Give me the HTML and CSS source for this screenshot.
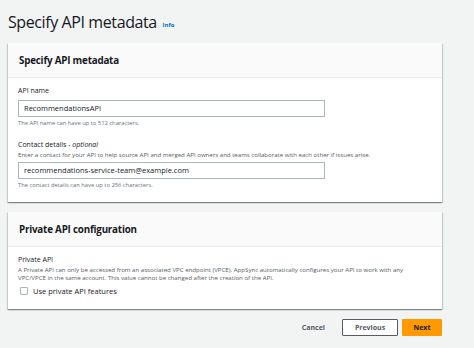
FILE: index.html
```html
<!DOCTYPE html>
<html>
<head>
<meta charset="utf-8">
<link rel="stylesheet" href="styles.css">
</head>
<body>
<div class="page">
  <h1 class="title">Specify API metadata <a class="info">Info</a></h1>

  <section class="card">
    <div class="card-head"><h2>Specify API metadata</h2></div>
    <div class="card-body">
      <div class="field">
        <div class="label">API name</div>
        <div class="input">RecommendationsAPI</div>
        <div class="hint">The API name can have up to 512 characters.</div>
      </div>
      <div class="field">
        <div class="label">Contact details - <i>optional</i></div>
        <div class="desc">Enter a contact for your API to help source API and merged API owners and teams collaborate with each other if issues arise.</div>
        <div class="input">recommendations-service-team@example.com</div>
        <div class="hint">The contact details can have up to 256 characters.</div>
      </div>
    </div>
  </section>

  <section class="card">
    <div class="card-head"><h2>Private API configuration</h2></div>
    <div class="card-body">
      <div class="label">Private API</div>
      <div class="desc">A Private API can only be accessed from an associated VPC endpoint (VPCE). AppSync automatically configures your API to work with any VPC/VPCE in the same account. This value cannot be changed after the creation of the API.</div>
      <label class="check"><span class="box"></span>Use private API features</label>
    </div>
  </section>

  <div class="actions">
    <button class="btn link">Cancel</button>
    <button class="btn secondary">Previous</button>
    <button class="btn primary">Next</button>
  </div>
</div>
</body>
</html>
```

FILE: styles.css
```css
html, body {
  margin: 0;
  padding: 0;
  background: #f2f3f3;
  font-family: "Open Sans", "Noto Sans", sans-serif;
  color: #16191f;
}
.page {
  width: 434px;
  padding: 8px 32px 0 8px;
}
.title {
  margin: 0;
  font-size: 16px;
  font-weight: 400;
  line-height: 28px;
  height: 35px;
  letter-spacing: -0.4px;
}
.info {
  font-size: 6px;
  font-weight: 700;
  color: #0073bb;
  letter-spacing: 0;
  vertical-align: 1px;
  margin-left: 2px;
}
.card {
  background: #fff;
  box-shadow: 0 1px 1px 0 rgba(0,28,36,0.3), 1px 1px 1px 0 rgba(0,28,36,0.15), -1px 1px 1px 0 rgba(0,28,36,0.15);
  margin-bottom: 10px;
}
.card-head {
  background: #fafafa;
  border-bottom: 1px solid #eaeded;
  height: 34px;
  display: flex;
  align-items: center;
  padding: 0 11px;
}
.card-head h2 {
  margin: 0;
  font-size: 9.8px;
  font-weight: 700;
  letter-spacing: -0.2px;
}
.card-body {
  padding: 8px 10px 13px 10px;
}
.field + .field {
  margin-top: 13px;
}
.label {
  font-size: 7px;
  line-height: 10px;
  margin-bottom: 4px;
}
.label i {
  font-style: italic;
}
.desc {
  font-size: 6.1px;
  line-height: 8px;
  color: #545b64;
  margin-top: -3px;
  margin-bottom: 3px;
}
.input {
  width: 307px;
  box-sizing: border-box;
  height: 17px;
  border: 1px solid #aab7b8;
  font-size: 7.5px;
  line-height: 15px;
  padding: 0 5px;
}
.hint {
  font-size: 5.8px;
  line-height: 8px;
  color: #687078;
  margin-top: 2px;
}
.check {
  display: flex;
  align-items: center;
  font-size: 7.5px;
  margin-top: 4px;
  gap: 5px;
  padding-left: 2px;
}
.box {
  width: 6px;
  height: 6px;
  border: 1px solid #aab7b8;
  border-radius: 1px;
  background: #fff;
}
.actions {
  display: flex;
  justify-content: flex-end;
  gap: 4px;
  margin-top: 1px;
}
.btn {
  font-family: inherit;
  font-size: 7px;
  font-weight: 700;
  height: 17px;
  padding: 0 10px;
  border: 1px solid transparent;
  border-radius: 1px;
  background: none;
}
.link {
  color: #545b64;
  margin-right: 2px;
}
.secondary {
  border-color: #545b64;
  background: #fff;
  color: #545b64;
  width: 56px;
}
.primary {
  background: #ff9900;
  color: #16191f;
  width: 40px;
}
```
